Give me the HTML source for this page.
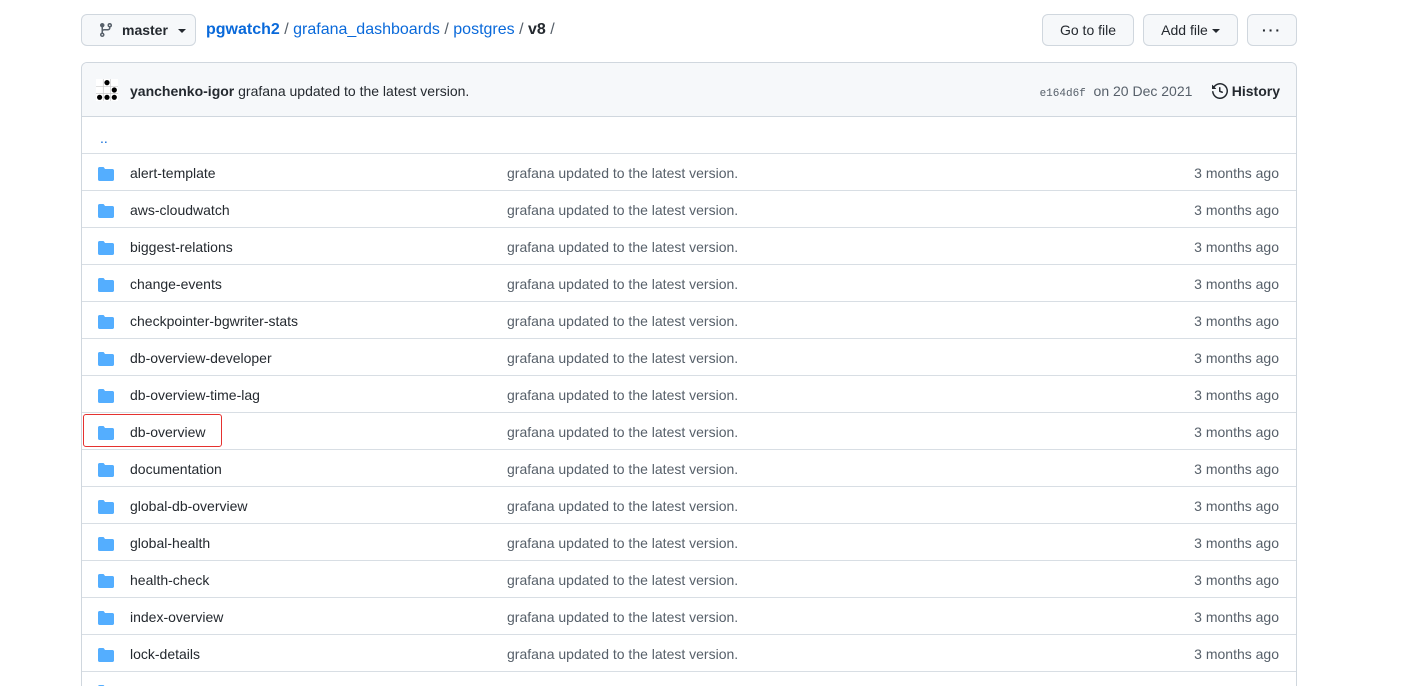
<!DOCTYPE html>
<html style="width:1412px;height:686px;overflow:hidden"><head><style>
*{box-sizing:border-box;margin:0;padding:0}
body{width:1412px;height:686px;overflow:hidden;background:#fff;font-family:"Liberation Sans",sans-serif;font-size:14px;color:#24292f;position:relative}
.btn{position:absolute;top:14px;height:32px;border:1px solid #d0d7de;border-radius:6px;background:#f6f8fa;font-weight:bold;font-size:14px;line-height:30px;text-align:center;color:#24292f}
.caret{display:inline-block;width:0;height:0;border-left:4px solid transparent;border-right:4px solid transparent;border-top:4px solid #24292f;vertical-align:middle;margin-left:4px}
.box{position:absolute;left:81px;top:62px;width:1216px;height:624px;border:1px solid #d0d7de;border-bottom:none;border-radius:6px 6px 0 0;overflow:hidden}
.hdr{height:54px;background:#f6f8fa;border-bottom:1px solid #d0d7de;position:relative}
.row{height:37px;border-top:1px solid #d8dee4;position:relative;line-height:38px}
.row .f{position:absolute;left:16px;top:13px}
.row .n{position:absolute;left:48px}
.row .m{position:absolute;left:425px;color:#57606a}
.row .a{position:absolute;right:17px;color:#57606a}
a{color:#0969da;text-decoration:none}
</style></head><body>
<div class="btn" style="left:81px;width:115px;text-align:left;padding-left:16px">
<svg width="16" height="16" viewBox="0 0 16 16" style="position:absolute;left:16px;top:7px" fill="#57606a"><path d="M11.75 2.5a.75.75 0 100 1.5.75.75 0 000-1.5zm-2.25.75a2.25 2.25 0 113 2.122V6A2.5 2.5 0 0110 8.5H6a1 1 0 00-1 1v1.128a2.251 2.251 0 11-1.5 0V5.372a2.25 2.25 0 111.5 0v1.836A2.492 2.492 0 016 7h4a1 1 0 001-1v-.628A2.25 2.25 0 019.5 3.25zM4.25 12a.75.75 0 100 1.5.75.75 0 000-1.5zM3.5 3.25a.75.75 0 111.5 0 .75.75 0 01-1.5 0z"/></svg>
<span style="margin-left:24px">master</span> <span class="caret" style="margin-left:6px"></span></div>
<div style="position:absolute;left:206px;top:21px;font-size:16px;color:#57606a"><a href="#" style="font-weight:bold">pgwatch2</a> / <a href="#">grafana_dashboards</a> / <a href="#">postgres</a> / <b style="color:#24292f">v8</b> /</div>
<div class="btn" style="left:1042px;width:92px;font-weight:normal">Go to file</div>
<div class="btn" style="left:1143px;width:95px;font-weight:normal">Add file<span class="caret"></span></div>
<div class="btn" style="left:1247px;width:50px;letter-spacing:2px">···</div>
<div class="box">
<div class="hdr">
<svg width="22" height="22" viewBox="0 0 22 22" style="position:absolute;left:14px;top:16px"><rect width="22" height="22" fill="#fff"/><g stroke="#ccc" stroke-width=".7"><path d="M7.3 0V22M14.6 0V22M0 7.3H22M0 14.6H22"/></g><g fill="#000"><circle cx="11" cy="3.6" r="2.6"/><circle cx="18.3" cy="11" r="2.6"/><circle cx="3.6" cy="18.3" r="2.6"/><circle cx="11" cy="18.3" r="2.6"/><circle cx="18.3" cy="18.3" r="2.6"/></g></svg>
<div style="position:absolute;left:48px;top:20px"><b>yanchenko-igor</b> <span style="color:#24292f">grafana updated to the latest version.</span></div>
<div style="position:absolute;right:16px;top:20px;color:#57606a"><span style="font-family:'Liberation Mono',monospace;font-size:11px">e164d6f</span>&nbsp; on 20 Dec 2021 &nbsp;&nbsp;&nbsp;
<svg width="16" height="16" viewBox="0 0 16 16" fill="#24292f" style="vertical-align:-3px"><path d="M1.643 3.143L.427 1.927A.25.25 0 000 2.104V5.75c0 .138.112.25.25.25h3.646a.25.25 0 00.177-.427L2.715 4.215a6.5 6.5 0 11-1.18 4.458.75.75 0 10-1.493.154 8.001 8.001 0 101.6-5.684zM7.75 4a.75.75 0 01.75.75v2.992l2.028.812a.75.75 0 01-.557 1.392l-2.5-1A.75.75 0 017 8.25v-3.5A.75.75 0 017.75 4z"/></svg> <b style="color:#24292f">History</b></div>
</div>
<div class="row" style="border-top:none;height:36px"><a href="#" style="position:absolute;left:18px;top:2px">..</a></div>
<div id="rows"></div>
</div>
<div style="position:absolute;left:83px;top:414px;width:139px;height:33px;border:1px solid #e5312f;border-radius:3px"></div>
<script>
var n=["alert-template","aws-cloudwatch","biggest-relations","change-events","checkpointer-bgwriter-stats","db-overview-developer","db-overview-time-lag","db-overview","documentation","global-db-overview","global-health","health-check","index-overview","lock-details","x"];
var h="";n.forEach(function(x){h+='<div class="row"><svg class="f" width="16" height="14" viewBox="0 0 16 14" fill="#54aeff"><path d="M0 1.5C0 .7.7 0 1.5 0h3.4c.5 0 1 .2 1.2.6L7 2h7.5c.8 0 1.5.7 1.5 1.5v9c0 .8-.7 1.5-1.5 1.5h-13C.7 14 0 13.3 0 12.5z"/></svg><span class="n">'+(x=="x"?"":x)+'</span><span class="m">'+(x=="x"?"":"grafana updated to the latest version.")+'</span><span class="a">'+(x=="x"?"":"3 months ago")+'</span></div>'});
document.getElementById("rows").innerHTML=h;
</script>
</body></html>
